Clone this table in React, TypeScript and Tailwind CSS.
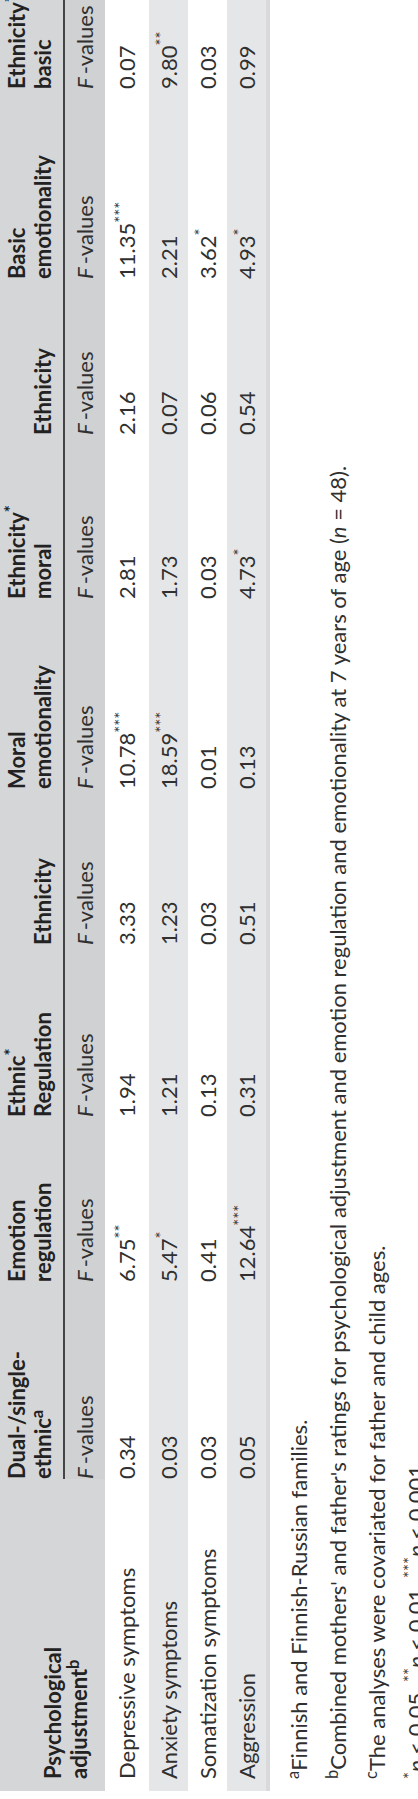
import React from 'react';

// grid tracks shared by header and body rows
const COLS = 'grid grid-cols-[300px_197px_165px_172px_156px_190px_164px_156px_190px_150px]';

type Val = [string, string?];

const HEADERS: React.ReactNode[] = [
  <>Dual-/single-<br />ethnic<sup>a</sup></>,
  <>Emotion<br />regulation</>,
  <>Ethnic<sup>*</sup><br />Regulation</>,
  <>Ethnicity</>,
  <>Moral<br />emotionality</>,
  <>Ethnicity<sup>*</sup><br />moral</>,
  <>Ethnicity</>,
  <>Basic<br />emotionality</>,
  <>Ethnicity<sup>*</sup><br />basic</>,
];

const ROWS: { label: string; values: Val[] }[] = [
  {
    label: 'Depressive symptoms',
    values: [['0.34'], ['6.75', '**'], ['1.94'], ['3.33'], ['10.78', '***'], ['2.81'], ['2.16'], ['11.35', '***'], ['0.07']],
  },
  {
    label: 'Anxiety symptoms',
    values: [['0.03'], ['5.47', '*'], ['1.21'], ['1.23'], ['18.59', '***'], ['1.73'], ['0.07'], ['2.21'], ['9.80', '**']],
  },
  {
    label: 'Somatization symptoms',
    values: [['0.03'], ['0.41'], ['0.13'], ['0.03'], ['0.01'], ['0.03'], ['0.06'], ['3.62', '*'], ['0.03']],
  },
  {
    label: 'Aggression',
    values: [['0.05'], ['12.64', '***'], ['0.31'], ['0.51'], ['0.13'], ['4.73', '*'], ['0.54'], ['4.93', '*'], ['0.99']],
  },
];

function FValues() {
  return (
    <span>
      <i>F</i>
      <span className="ml-[3px]">-values</span>
    </span>
  );
}

export default function App() {
  return (
    <div className="w-[418px] h-[1799px] overflow-hidden bg-white">
      {/* the table page is laid out landscape and turned a quarter turn */}
      <div className="w-[1799px] h-[418px] origin-top-left translate-y-[1799px] -rotate-90">
        <div className="text-[22px] leading-[26px] font-[Lato,sans-serif] text-[#303030]">
          <div className={`${COLS} -mt-2 bg-[#d5d6d8]`}>
            <div className="row-span-2 h-[105px] flex flex-col justify-end pl-3 pb-[13px] font-bold text-[#222]">
              <div>Psychological</div>
              <div>
                adjustment<sup>b</sup>
              </div>
            </div>
            {HEADERS.map((h, i) => (
              <div key={i} className="h-[63px] flex flex-col justify-end pl-3 pb-[7px] font-bold text-[#222]">
                <div>{h}</div>
              </div>
            ))}
            {HEADERS.map((_, i) => (
              <div
                key={i}
                className={`h-[42px] flex items-center border-t-2 border-[#454545] bg-[#d0d1d3] ${i === 0 ? 'ml-3' : 'pl-3'}`}
              >
                <FValues />
              </div>
            ))}
          </div>

          {ROWS.map((r, ri) => (
            <div
              key={r.label}
              className={`${COLS} ${ri === 0 ? 'h-[44px]' : 'h-[39px]'} ${ri % 2 ? 'bg-[#e5e6e8]' : 'bg-white'}`}
            >
              <div className="flex items-center pl-3">{r.label}</div>
              {r.values.map(([v, s], i) => (
                <div key={i} className="flex items-center pl-3">
                  <span>
                    {v}
                    {s && <sup>{s}</sup>}
                  </span>
                </div>
              ))}
            </div>
          ))}
          <div className="h-[4px] bg-[#d9d9db]" />

          <div className="pt-[16px] pl-3">
            <p className="mb-[13px]">
              <sup>a</sup>Finnish and Finnish-Russian families.
            </p>
            <p className="mb-[13px]">
              <sup>b</sup>Combined mothers' and father's ratings for psychological adjustment and emotion regulation and
              emotionality at 7 years of age (<i>n</i> = 48).
            </p>
            <p className="mb-[13px]">
              <sup>c</sup>The analyses were covariated for father and child ages.
            </p>
            <p className="mb-[13px]">
              <sup>*</sup>
              <i>p</i> &lt; 0.05. <sup>**</sup>
              <i>p</i> &lt; 0.01. <sup>***</sup>
              <i>p</i> &lt; 0.001.
            </p>
          </div>
        </div>
      </div>
    </div>
  );
}
